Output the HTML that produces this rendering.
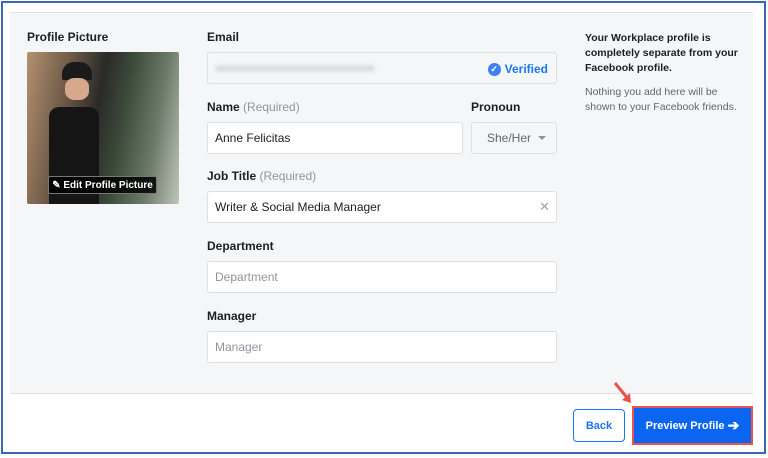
<!DOCTYPE html>
<html><head><style>
*{box-sizing:border-box;margin:0;padding:0}
body{width:768px;height:458px;background:#fff;font-family:"Liberation Sans",sans-serif;position:relative;overflow:hidden}
.frame{position:absolute;left:1px;top:1px;width:765px;height:453px;border:2px solid #3a67b0;background:#fff}
.panel{position:absolute;left:10px;top:12px;width:743px;height:382px;background:#f5f6f7;border-top:1px solid #dfe1e5;border-bottom:1px solid #dfe1e5}
.lbl{position:absolute;font-size:12px;font-weight:bold;color:#1c1e21}
.lbl span{font-weight:normal;color:#90949c}
.inp{position:absolute;background:#fff;border:1px solid #dddfe2;border-radius:3px;font-size:12px;color:#1c1e21;padding-left:7px;display:flex;align-items:center}
.ph{color:#90949c}
</style></head><body>
<div class="frame"></div>
<div class="panel"></div>
<div class="lbl" style="left:27px;top:30px">Profile Picture</div>
<div style="position:absolute;left:27px;top:52px;width:152px;height:152px;border-radius:2px;background:linear-gradient(100deg,#b49070 0%,#6e5a48 25%,#2a2a28 45%,#3c4a3a 60%,#6c7a68 80%,#bfc6bd 100%)">
<div style="position:absolute;left:35px;top:10px;width:30px;height:18px;background:#1a1a1a;border-radius:12px 12px 2px 2px"></div>
<div style="position:absolute;left:38px;top:26px;width:24px;height:22px;background:#d6a98c;border-radius:40%"></div>
<div style="position:absolute;left:22px;top:55px;width:50px;height:97px;background:#151515;border-radius:10px 10px 0 0"></div>
<div style="position:absolute;left:21px;top:124px;width:109px;height:18px;background:rgba(0,0,0,.85);border:1px solid #777;border-radius:2px;color:#fff;font-size:10px;font-weight:bold;display:flex;align-items:center;justify-content:center">✎&nbsp;Edit Profile Picture</div>
</div>
<div class="lbl" style="left:207px;top:30px">Email</div>
<div class="inp" style="left:207px;top:52px;width:350px;height:32px;background:#f5f6f7">
<div style="width:160px;height:7px;background:#dcdee2;border-radius:4px;filter:blur(1.5px)"></div>
<div style="position:absolute;right:8px;top:9px;font-size:12px;font-weight:bold;color:#1877f2;display:flex;align-items:center"><span style="display:inline-block;width:13px;height:13px;border-radius:50%;background:#4080ec;color:#fff;font-size:9px;text-align:center;line-height:13px;margin-right:4px">✓</span>Verified</div></div>
<div class="lbl" style="left:207px;top:100px">Name <span>(Required)</span></div>
<div class="lbl" style="left:471px;top:100px">Pronoun</div>
<div class="inp" style="left:207px;top:122px;width:256px;height:32px">Anne Felicitas</div>
<div class="inp" style="left:471px;top:122px;width:86px;height:32px;background:#f5f6f7;color:#606770;padding-left:15px">She/Her<span style="position:absolute;right:10px;top:13px;border:4px solid transparent;border-top:4px solid #8d949e"></span></div>
<div class="lbl" style="left:207px;top:169px">Job Title <span>(Required)</span></div>
<div class="inp" style="left:207px;top:191px;width:350px;height:32px">Writer &amp; Social Media Manager<span style="position:absolute;right:6px;color:#a0a4aa;font-size:13px">✕</span></div>
<div class="lbl" style="left:207px;top:239px">Department</div>
<div class="inp ph" style="left:207px;top:261px;width:350px;height:32px">Department</div>
<div class="lbl" style="left:207px;top:309px">Manager</div>
<div class="inp ph" style="left:207px;top:331px;width:350px;height:32px">Manager</div>
<div style="position:absolute;left:585px;top:31px;width:160px;font-size:10.5px;font-weight:bold;color:#1c1e21;line-height:15px">Your Workplace profile is completely separate from your Facebook profile.</div>
<div style="position:absolute;left:585px;top:85px;width:160px;font-size:10.5px;color:#606770;line-height:15px">Nothing you add here will be shown to your Facebook friends.</div>
<div style="position:absolute;left:573px;top:409px;width:52px;height:33px;border:1px solid #1877f2;border-radius:4px;color:#1877f2;font-size:11px;font-weight:bold;display:flex;align-items:center;justify-content:center">Back</div>
<div style="position:absolute;left:632px;top:406px;width:121px;height:39px;border:2px solid #e8534a;background:#0a66f0;color:#fff;font-size:11px;font-weight:bold;display:flex;align-items:center;justify-content:center">Preview Profile&nbsp;<span style="font-size:14px">➔</span></div>
<svg style="position:absolute;left:612px;top:380px" width="22" height="26"><path d="M3 3 L17 20" stroke="#e8534a" stroke-width="3"/><path d="M10 20 L19 23 L18 13 Z" fill="#e8534a"/></svg>
</body></html>
